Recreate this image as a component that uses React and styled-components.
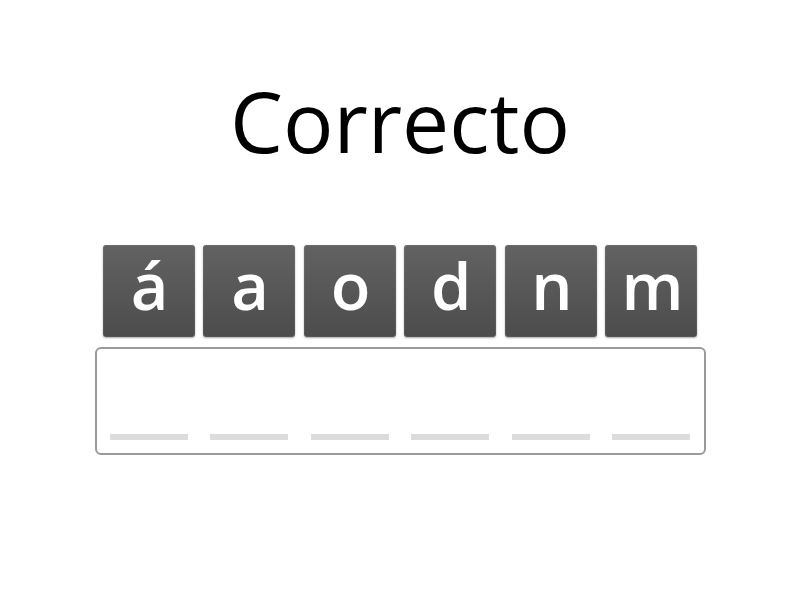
import styled, { createGlobalStyle } from "styled-components";

const GlobalStyle = createGlobalStyle`
  body {
    margin: 0;
    background: #fff;
    font-family: "Open Sans", sans-serif;
  }
`;

const letters = ["á", "a", "o", "d", "n", "m"];

const App = () => {
  return (
    <Page>
      <GlobalStyle />
      <Title>Correcto</Title>
      <Tiles>
        {letters.map((l, i) => (
          <Tile key={i}>{l}</Tile>
        ))}
      </Tiles>
      <AnswerBox>
        {letters.map((l, i) => (
          <Slot key={i} />
        ))}
      </AnswerBox>
    </Page>
  );
};

const Page = styled.div`
  width: 800px;
  height: 600px;
  display: flex;
  flex-direction: column;
  align-items: center;
`;

const Title = styled.h1`
  margin: 64px 0 0;
  font-family: "Open Sans", sans-serif;
  font-weight: 400;
  font-size: 84px;
  line-height: 114px;
  color: #000;
`;

const Tiles = styled.div`
  display: flex;
  gap: 8.6px;
  margin-top: 67px;
`;

const Tile = styled.div`
  width: 92px;
  height: 92px;
  box-sizing: border-box;
  border-radius: 3px;
  background: linear-gradient(#626262, #4c4c4c);
  box-shadow: 0 1px 2px rgba(0, 0, 0, 0.35), inset 0 0 0 1px rgba(255, 255, 255, 0.06);
  color: #fff;
  font-family: "Open Sans", sans-serif;
  font-weight: 600;
  font-size: 65px;
  display: flex;
  align-items: center;
  justify-content: center;
  line-height: 1;
  padding-bottom: 12px;
  padding-left: 2px;
`;

const AnswerBox = styled.div`
  margin-top: 10px;
  width: 611px;
  height: 108px;
  box-sizing: border-box;
  border: 2px solid #9a9a9a;
  border-radius: 6px;
  display: flex;
  align-items: flex-end;
  justify-content: space-between;
  padding: 0 13px 13px 13px;
`;

const Slot = styled.div`
  width: 78px;
  height: 6px;
  background: #dcdcdc;
`;

export default App;
